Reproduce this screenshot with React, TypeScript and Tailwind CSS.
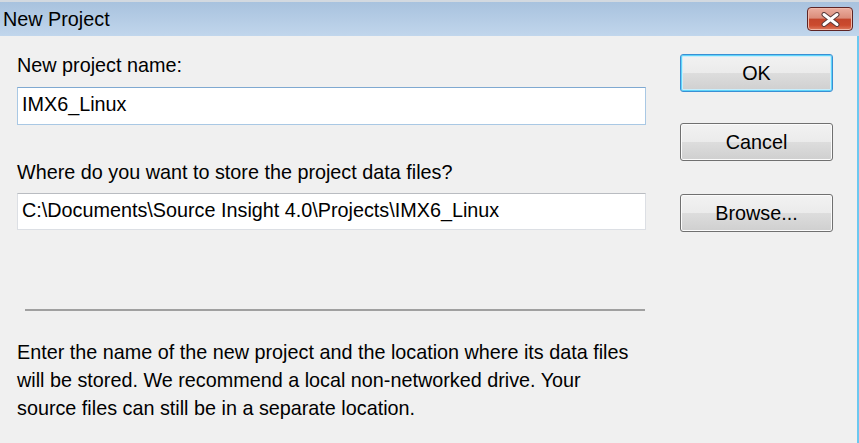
import React from "react";

function WinButton({ label, isDefault }: { label: string; isDefault?: boolean }) {
  return (
    <div
      className={
        "w-[153px] h-[38px] rounded-[3px] border flex items-center justify-center text-black bg-[linear-gradient(to_bottom,#f2f2f2_0%,#ebebeb_50%,#dddddd_50%,#cfcfcf_100%)] " +
        (isDefault
          ? "border-[#3a8fd4] shadow-[inset_0_0_0_1px_#5fd4f9,inset_0_0_0_2px_#c9eefc]"
          : "border-[#707070] shadow-[inset_0_0_0_1px_#fbfbfb]")
      }
    >
      {label}
    </div>
  );
}

export default function App() {
  return (
    <div
      className="w-[859px] h-[443px] overflow-hidden flex flex-col bg-[#f0f0f0] text-[19.8px] leading-[25px] text-black"
      style={{ fontFamily: '"Liberation Sans", Arial, sans-serif' }}
    >
      {/* Title bar */}
      <div className="h-[36px] shrink-0 flex justify-between border-t-2 border-[#d3d9e0] bg-gradient-to-b from-[#a8c2de] to-[#c1d6ec]">
        <div className="pl-[3px] pt-[5px]">New Project</div>
        <div className="mt-[5px] mr-[6px] w-[46px] h-[24px] rounded-[4px] border border-[#5e2424] flex items-center justify-center bg-[linear-gradient(to_bottom,#ebaea0_0%,#db8d7b_45%,#c4462c_52%,#cb4a2e_78%,#de7a5e_100%)] shadow-[inset_0_0_0_1px_#f0b9a9]">
          <svg width="19" height="15" viewBox="0 0 19 15">
            <path d="M3 2.5 L16 12.5 M16 2.5 L3 12.5" stroke="#5b3b3b" strokeWidth="5" strokeLinecap="round" />
            <path d="M3 2.5 L16 12.5 M16 2.5 L3 12.5" stroke="#ffffff" strokeWidth="3" strokeLinecap="round" />
          </svg>
        </div>
      </div>

      {/* Body */}
      <div className="flex-1 flex border-r-2 border-[#6cc8f0]">
        {/* Left column */}
        <div className="ml-[17px] w-[629px] flex flex-col">
          <div className="mt-[17px]">New project name:</div>
          <div className="mt-[9px] h-[38px] border border-[#a9c8e4] border-t-[#7fa9d1] bg-white pl-[4px] pt-[4px]">
            IMX6_Linux
          </div>

          <div className="mt-[35px]">Where do you want to store the project data files?</div>
          <div className="mt-[8px] h-[37px] border border-[#dcdfe4] border-t-[#b9bcc1] bg-white pl-[4px] pt-[4px]">
            C:\Documents\Source Insight 4.0\Projects\IMX6_Linux
          </div>

          <div className="mt-[79px] ml-[8px] w-[620px] border-t-2 border-[#a0a0a0]" />

          <div className="mt-[27px] leading-[28px]">
            Enter the name of the new project and the location where its data files
            <br />
            will be stored. We recommend a local non-networked drive. Your
            <br />
            source files can still be in a separate location.
          </div>
        </div>

        {/* Right column: buttons */}
        <div className="ml-[34px] flex flex-col">
          <div className="mt-[18px]">
            <WinButton label="OK" isDefault />
          </div>
          <div className="mt-[31px]">
            <WinButton label="Cancel" />
          </div>
          <div className="mt-[33px]">
            <WinButton label="Browse..." />
          </div>
        </div>
      </div>
    </div>
  );
}
